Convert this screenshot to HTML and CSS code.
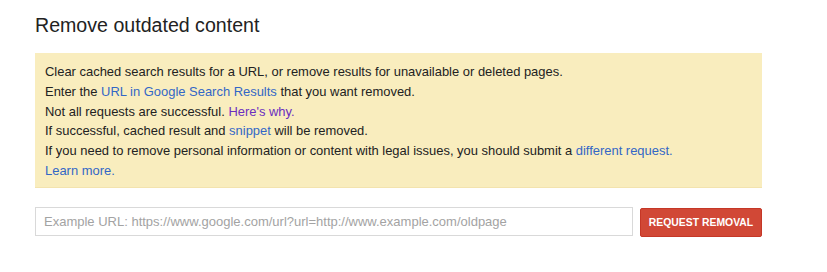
FILE: index.html
```html
<!DOCTYPE html>
<html>
<head>
<meta charset="utf-8">
<link rel="stylesheet" href="styles.css">
</head>
<body>
<div class="page">
  <h1 class="title">Remove outdated content</h1>
  <div class="notice">
    <div>Clear cached search results for a URL, or remove results for unavailable or deleted pages.</div>
    <div>Enter the <a class="link">URL in Google Search Results</a> that you want removed.</div>
    <div>Not all requests are successful. <a class="link visited">Here's why.</a></div>
    <div>If successful, cached result and <a class="link">snippet</a> will be removed.</div>
    <div>If you need to remove personal information or content with legal issues, you should submit a <a class="link">different request.</a></div>
    <div><a class="link">Learn more.</a></div>
  </div>
  <div class="form">
    <input class="url" type="text" placeholder="Example URL: https://www.google.com/url?url=http://www.example.com/oldpage">
    <button class="btn">REQUEST REMOVAL</button>
  </div>
</div>
</body>
</html>
```
FILE: styles.css
```css
html, body {
  margin: 0;
  padding: 0;
  background: #fff;
}
body {
  font-family: "Liberation Sans", Arial, sans-serif;
  color: #222;
}
.page {
  padding: 13px 65px 0 35px;
  width: 727px;
}
.title {
  margin: 0 0 16px 0;
  font-size: 19.6px;
  line-height: 24px;
  font-weight: normal;
  color: #222;
}
.notice {
  background: #f9edbe;
  border-bottom: 1px solid #f3e3ae;
  padding: 9px 10px 6px 10px;
  font-size: 12.95px;
  line-height: 19.8px;
  color: #222;
}
.link {
  color: #3367c6;
  text-decoration: none;
}
.link.visited {
  color: #6b2fc0;
}
.form {
  display: flex;
  align-items: flex-start;
  gap: 7px;
  margin-top: 19px;
}
.url {
  box-sizing: border-box;
  width: 598px;
  height: 29px;
  border: 1px solid #d9d9d9;
  padding: 0 8px;
  font-family: "Liberation Sans", Arial, sans-serif;
  font-size: 13px;
  color: #222;
  outline: none;
}
.url::placeholder {
  color: #a3a3a3;
}
.btn {
  box-sizing: border-box;
  margin-top: 1px;
  width: 122px;
  height: 29px;
  background: #d14836;
  border: 1px solid #c53727;
  border-radius: 2px;
  color: #fff;
  font-family: "Liberation Sans", Arial, sans-serif;
  font-size: 10.4px;
  font-weight: bold;
  padding: 0;
}
```
